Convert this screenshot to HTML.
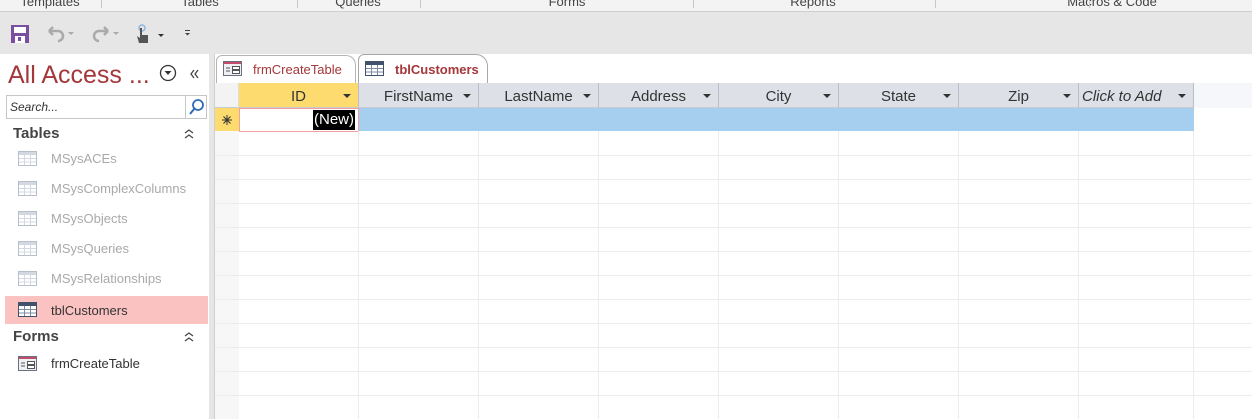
<!DOCTYPE html>
<html><head><style>
*{margin:0;padding:0;box-sizing:border-box}
body{width:1252px;height:419px;overflow:hidden;background:#fff;font-family:"Liberation Sans",sans-serif;position:relative}
.a{position:absolute}
.top{left:0;top:0;width:1252px;height:12px;background:#f3f3f3;border-bottom:1px solid #cfcfcf;overflow:hidden}
.top span{position:absolute;top:-6px;font-size:13px;color:#444;transform:translateX(-50%)}
.top i{position:absolute;top:0;width:1px;height:8px;background:#c8c8c8}
.tb{left:0;top:12px;width:1252px;height:42px;background:#e6e6e6}
.nav{left:0;top:54px;width:209px;height:365px;background:#fff}
.split{left:209px;top:54px;width:6px;height:365px;background:#e6e6e6;border-right:1px solid #d0d0d0}
.item{position:absolute;left:0;width:209px;height:29px;font-size:13px;color:#a9a9a9}
.item span{position:absolute;left:51px;top:7px}
.ic{position:absolute;left:18px;top:7px}
.hdr{top:83px;height:25px;background:#dde1e7;border-right:1px solid #b9bec6;border-bottom:1px solid #c8ccd2;font-size:15px;color:#333;text-align:center;line-height:27px}
.hdr b{position:absolute;right:7px;top:11px;width:0;height:0;border-left:4px solid transparent;border-right:4px solid transparent;border-top:4px solid #333}
.hl{left:215px;width:1037px;height:1px;background:#ececec}
.vl{top:131px;width:1px;height:288px;background:#ececec}
</style></head><body>
<svg width="0" height="0" style="position:absolute"><defs>
<symbol id="tg" viewBox="0 0 19 15"><rect x="0.5" y="0.5" width="18" height="14" fill="#fff" stroke="#b8bfcc"/><rect x="1" y="1" width="17" height="3" fill="#d3d8e2"/><path d="M1 7.5h17M1 11h17M6.5 4v10M12.5 4v10" stroke="#d3d8e2"/></symbol>
<symbol id="td" viewBox="0 0 19 15"><rect x="0.5" y="0.5" width="18" height="14" fill="#fff" stroke="#41506b"/><rect x="1" y="1" width="17" height="3" fill="#41506b"/><path d="M1 7.5h17M1 11h17M6.5 4v10M12.5 4v10" stroke="#7d8ba3"/></symbol>
<symbol id="fm" viewBox="0 0 19 15"><rect x="0.5" y="0.5" width="18" height="14" fill="#eef0f4" stroke="#6b7080"/><rect x="1" y="1" width="17" height="2" fill="#c24d6b"/><path d="M3 7h4M3 10h4" stroke="#555"/><rect x="9.5" y="5.5" width="7" height="3" fill="#fff" stroke="#555"/><rect x="9.5" y="9.5" width="7" height="3" fill="#fff" stroke="#555"/></symbol>
</defs></svg>
<div class="a top">
<span style="left:50px">Templates</span><i style="left:101px"></i>
<span style="left:200px">Tables</span><i style="left:297px"></i>
<span style="left:358px">Queries</span><i style="left:420px"></i>
<span style="left:567px">Forms</span><i style="left:693px"></i>
<span style="left:813px">Reports</span><i style="left:935px"></i>
<span style="left:1112px">Macros &amp; Code</span><i style="left:1089px"></i>
</div>
<div class="a tb">
<svg class="a" style="left:11px;top:13px" width="18" height="18"><rect x="0" y="0" width="18" height="18" fill="#7b4fa0"/><rect x="3" y="2" width="12" height="6" fill="#fff"/><rect x="4" y="11" width="10" height="7" fill="#fff"/><rect x="7" y="12" width="3" height="4" fill="#7b4fa0"/></svg>
<svg class="a" style="left:46px;top:13px" width="30" height="18"><path d="M3 6 L7 2 M3 6 L7 10 M3 6 H12 a5 5 0 0 1 0 10" stroke="#aaa" stroke-width="2.5" fill="none"/><path d="M22 7 l3 3 l3 -3z" fill="#aaa"/></svg>
<svg class="a" style="left:91px;top:13px" width="30" height="18"><path d="M17 6 L13 2 M17 6 L13 10 M17 6 H8 a5 5 0 0 0 0 10" stroke="#aaa" stroke-width="2.5" fill="none"/><path d="M22 7 l3 3 l3 -3z" fill="#aaa"/></svg>
<svg class="a" style="left:133px;top:11px" width="36" height="22"><circle cx="9" cy="5" r="3" fill="none" stroke="#8fb6d9" stroke-width="1.5"/><path d="M7 5 v10 l-3 -2 l2 7 h9 v-8 h-6 v-7z" fill="#555"/><path d="M25 11 l3 3 l3 -3z" fill="#333"/></svg>
<svg class="a" style="left:184px;top:16px" width="8" height="8"><rect x="1" y="2" width="5" height="1" fill="#444"/><path d="M1 5 h5 l-2.5 2.5z" fill="#444"/></svg>
</div>
<div class="a nav">
<div class="a" style="left:8px;top:7px;font-size:25px;color:#a4373a">All Access ...</div>
<svg class="a" style="left:159px;top:10px" width="18" height="18"><circle cx="9" cy="9" r="7.5" fill="none" stroke="#333" stroke-width="1.3"/><path d="M5.5 7 h7 l-3.5 4z" fill="#333"/></svg>
<svg class="a" style="left:189px;top:15px" width="12" height="10"><path d="M5 1L2 5l3 4M9 1L6 5l3 4" stroke="#444" stroke-width="1.3" fill="none"/></svg>
<div class="a" style="left:6px;top:41px;width:201px;height:24px;border:1px solid #c6c6c6;font-size:12px;font-style:italic;color:#333;padding:4px 3px">Search...</div>
<div class="a" style="left:185px;top:41px;width:1px;height:24px;background:#c6c6c6"></div>
<svg class="a" style="left:188px;top:44px" width="18" height="18"><circle cx="10" cy="7" r="5" fill="none" stroke="#2f6db5" stroke-width="1.8"/><path d="M6.5 10.5 L2 16" stroke="#2f6db5" stroke-width="2"/></svg>
<div class="a" style="left:13px;top:71px;font-size:15px;font-weight:bold;color:#444">Tables</div>
<svg class="a" style="left:184px;top:75px" width="10" height="10"><path d="M1 4l4-3 4 3M1 9l4-3 4 3" stroke="#444" stroke-width="1.2" fill="none"/></svg>
<div class="item" style="top:90px"><svg class="ic" width="19" height="15"><use href="#tg"/></svg><span>MSysACEs</span></div>
<div class="item" style="top:120px"><svg class="ic" width="19" height="15"><use href="#tg"/></svg><span>MSysComplexColumns</span></div>
<div class="item" style="top:150px"><svg class="ic" width="19" height="15"><use href="#tg"/></svg><span>MSysObjects</span></div>
<div class="item" style="top:180px"><svg class="ic" width="19" height="15"><use href="#tg"/></svg><span>MSysQueries</span></div>
<div class="item" style="top:210px"><svg class="ic" width="19" height="15"><use href="#tg"/></svg><span>MSysRelationships</span></div>
<div class="item" style="top:242px;left:5px;width:203px;height:28px;background:#fbc2c2;color:#333"><svg class="ic" style="left:13px;top:6px" width="19" height="15"><use href="#td"/></svg><span style="left:46px;top:7px">tblCustomers</span></div>
<div class="a" style="left:13px;top:274px;font-size:15px;font-weight:bold;color:#444">Forms</div>
<svg class="a" style="left:184px;top:278px" width="10" height="10"><path d="M1 4l4-3 4 3M1 9l4-3 4 3" stroke="#444" stroke-width="1.2" fill="none"/></svg>
<svg class="ic" style="top:302px" width="19" height="15"><use href="#fm"/></svg>
<div class="a" style="left:51px;top:302px;font-size:13px;color:#333">frmCreateTable</div>
</div>
<div class="a split"></div>
<div class="a" style="left:216px;top:55px;width:140px;height:28px;background:#fff;border:1px solid #b5b5b5;border-bottom:none;border-radius:6px 10px 0 0"></div>
<svg class="a" style="left:223px;top:61px" width="19" height="15"><use href="#fm"/></svg>
<div class="a" style="left:253px;top:62px;font-size:13px;color:#a4373a">frmCreateTable</div>
<div class="a" style="left:358px;top:54px;width:130px;height:30px;background:#fff;border:1px solid #a8a8a8;border-bottom:none;border-radius:6px 12px 0 0"></div>
<svg class="a" style="left:365px;top:61px" width="19" height="15"><use href="#td"/></svg>
<div class="a" style="left:395px;top:62px;font-size:13px;font-weight:bold;color:#a4373a">tblCustomers</div>
<div class="a hdr" style="left:215px;width:24px;background:#f3f3f3;border-right:1px solid #ddd"></div>
<div class="a hdr" style="left:239px;width:120px;background:#fedb6e">ID<b></b></div>
<div class="a hdr" style="left:359px;width:120px">FirstName<b></b></div>
<div class="a hdr" style="left:479px;width:120px">LastName<b></b></div>
<div class="a hdr" style="left:599px;width:120px">Address<b></b></div>
<div class="a hdr" style="left:719px;width:120px">City<b></b></div>
<div class="a hdr" style="left:839px;width:120px">State<b></b></div>
<div class="a hdr" style="left:959px;width:120px">Zip<b></b></div>
<div class="a hdr" style="left:1079px;width:115px;font-style:italic;text-align:left;padding-left:3px">Click to Add<b></b></div>
<div class="a" style="left:1194px;top:83px;width:58px;height:25px;background:#f6f7fb"></div>
<div class="a" style="left:215px;top:108px;width:24px;height:24px;background:#fedb6e"></div>
<svg class="a" style="left:221px;top:114px" width="12" height="12"><path d="M6 1v10M1 6h10M2.5 2.5l7 7M9.5 2.5l-7 7" stroke="#333" stroke-width="1"/></svg>
<div class="a" style="left:239px;top:108px;width:120px;height:24px;background:#fff;border:1px solid #f2a0a0"></div>
<div class="a" style="left:313px;top:110px;height:20px;background:#000;color:#fff;font-size:15px;line-height:20px;padding:0 1px">(New)</div>
<div class="a" style="left:359px;top:108px;width:835px;height:23px;background:#a6cfef"></div>
<div class="a" style="left:215px;top:131px;width:24px;height:288px;background:#f7f7f7"></div>
<div class="a hl" style="top:155px"></div><div class="a hl" style="top:179px"></div><div class="a hl" style="top:203px"></div><div class="a hl" style="top:227px"></div><div class="a hl" style="top:251px"></div><div class="a hl" style="top:275px"></div><div class="a hl" style="top:299px"></div><div class="a hl" style="top:323px"></div><div class="a hl" style="top:347px"></div><div class="a hl" style="top:371px"></div><div class="a hl" style="top:395px"></div>
<div class="a vl" style="left:358px"></div><div class="a vl" style="left:478px"></div><div class="a vl" style="left:598px"></div><div class="a vl" style="left:718px"></div><div class="a vl" style="left:838px"></div><div class="a vl" style="left:958px"></div><div class="a vl" style="left:1078px"></div><div class="a vl" style="left:1193px"></div>
</body></html>
